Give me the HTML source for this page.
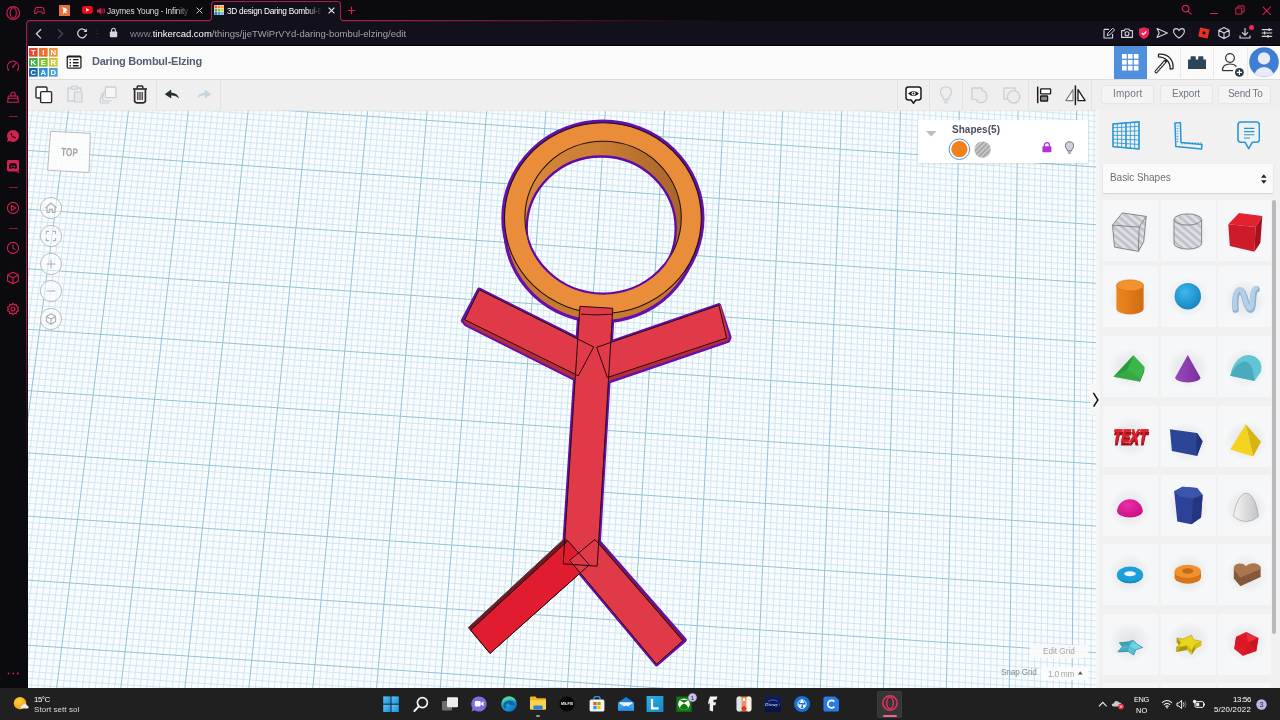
<!DOCTYPE html>
<html lang="en">
<head>
<meta charset="utf-8">
<title>3D design Daring Bombul-Elzing | Tinkercad</title>
<style>
*{box-sizing:border-box;margin:0;padding:0}
html,body{width:1280px;height:720px;overflow:hidden;background:#0b0a0f;font-family:"Liberation Sans",sans-serif}
.abs{position:absolute}
svg.abs{will-change:transform}
.t{position:absolute;white-space:pre;line-height:1;will-change:transform;font-family:"Liberation Sans",sans-serif}
#root{position:relative;width:1280px;height:720px;overflow:hidden}
/* opera chrome */
#tabstrip{left:0;top:0;width:1280px;height:21px;background:#0b0a0f}
#sidebar{left:0;top:0;width:27px;height:688px;background:#0b0a0f}
#addr{left:27px;top:21px;width:1253px;height:25px;background:#12101a}
/* tinkercad */
#tkhead{left:28px;top:46px;width:1252px;height:33px;background:#fafafa}
#tktool{left:28px;top:79px;width:1252px;height:31px;background:#efefef;border-top:1px solid #dcdcdc}
#canvas{left:28px;top:110px;width:1067.6px;height:578px;background:#fafcfe;overflow:hidden}
#rpanel{left:1095.6px;top:110px;width:184.4px;height:578px;background:#f1f1f2;border-left:3px solid #f6f6f7}
#taskbar{left:0;top:688px;width:1280px;height:32px;background:#202020}
</style>
</head>
<body>
<div id="root">
<div id="tabstrip" class="abs"></div>
<div id="sidebar" class="abs"></div>
<div id="addr" class="abs"></div>
<svg class="abs" style="left:0px;top:0px;" width="1280" height="720" viewBox="0 0 1280 720"><defs><linearGradient id="gpk" gradientUnits="userSpaceOnUse" x1="0" y1="0" x2="780" y2="0"><stop offset="0" stop-color="#a2234a"/><stop offset="0.46" stop-color="#a2234a"/><stop offset="0.74" stop-color="#4f142b"/><stop offset="0.95" stop-color="#3a1020" stop-opacity="0"/></linearGradient><linearGradient id="gpv" gradientUnits="userSpaceOnUse" x1="0" y1="20" x2="0" y2="688"><stop offset="0" stop-color="#a2234a"/><stop offset="0.44" stop-color="#a2234a"/><stop offset="0.58" stop-color="#5a1530" stop-opacity=".6"/><stop offset="0.7" stop-color="#3a1020" stop-opacity="0"/></linearGradient></defs>
<path d="M211.5 21V4Q211.5 1.5 214.5 1.5H337.5Q340.5 1.5 340.5 4V21Z" fill="#12101a"/>
<path d="M26.6 688V30" fill="none" stroke="url(#gpv)" stroke-width="1.1"/><path d="M26.6 30.5V24Q26.6 20.6 30 20.6H208.5Q211.5 20.6 211.5 17.5V4.5Q211.5 1.5 214.5 1.5H337.5Q340.5 1.5 340.5 4.5V17.5Q340.5 20.6 343.5 20.6H780" fill="none" stroke="url(#gpk)" stroke-width="1.1"/></svg><svg class="abs" style="left:5px;top:5px;" width="16" height="16" viewBox="0 0 16 16"><circle cx="8.2" cy="8" r="6.4" fill="none" stroke="#d1234f" stroke-width="1.1"/><ellipse cx="8.2" cy="8" rx="3.1" ry="5.2" fill="none" stroke="#d1234f" stroke-width="1.1"/></svg><svg class="abs" style="left:33.8px;top:5.8px;" width="10.8" height="9.2" viewBox="0 0 13 11"><path d="M3.6 1.8H9.4Q11.3 1.8 11.8 4L12.4 7.2Q12.6 9 11.2 9Q10.2 9 9.3 7.6L8.8 6.9H4.2L3.7 7.6Q2.8 9 1.8 9Q0.4 9 0.6 7.2L1.2 4Q1.7 1.8 3.6 1.8Z" fill="none" stroke="#d1234f" stroke-width="1.3" stroke-linejoin="round"/><path d="M3.2 4.4h2M8.6 4.4h.8" stroke="#d1234f" stroke-width="1"/></svg><svg class="abs" style="left:59px;top:4.5px;" width="11.2" height="11.2" viewBox="0 0 11.2 11.2"><rect width="11.2" height="11.2" fill="#e8703a"/><path d="M3.2 2.6Q7.4 2.4 8.4 5.6L6.6 6.2L8.6 8.8L5.8 7.4L3.4 9.2Q5.2 6.4 3.2 2.6Z" fill="#fff"/></svg><svg class="abs" style="left:82px;top:6.2px;" width="11" height="8" viewBox="0 0 11 8"><rect width="10.8" height="7.8" rx="2" fill="#f10a14"/><path d="M4.2 2.1L7.4 3.9L4.2 5.7Z" fill="#fff"/></svg><svg class="abs" style="left:95.5px;top:5.5px;" width="10" height="10" viewBox="0 0 10 10"><path d="M1 3.4H2.8L5.4 1.2V8.8L2.8 6.6H1Z" fill="#d1234f"/><path d="M6.6 3.2Q7.6 5 6.6 6.8M7.8 2Q9.6 5 7.8 8" fill="none" stroke="#d1234f" stroke-width=".9"/></svg><span class="t" style="left:107.40px;top:6.67px;font-size:8.30px;font-weight:400;color:#dcdce0;letter-spacing:-0.189px;">Jaymes Young - Infinity</span><div class="abs" style="left:176px;top:4px;width:16px;height:13px;background:linear-gradient(90deg,rgba(11,10,15,0),#0b0a0f)"></div><svg class="abs" style="left:195.5px;top:7px;" width="7" height="7" viewBox="0 0 7 7"><path d="M.6 .6L6.4 6.4M6.4 .6L.6 6.4" stroke="#cfcfd6" stroke-width="1"/></svg><svg class="abs" style="left:213.8px;top:4.8px;" width="10.4" height="10.4" viewBox="0 0 10.4 10.4"><rect width="10.4" height="10.4" rx="1" fill="#fff"/>
<rect x=".5" y=".5" width="2.8" height="2.8" fill="#e8502e"/><rect x="3.8" y=".5" width="2.8" height="2.8" fill="#ee7a30"/><rect x="7.1" y=".5" width="2.8" height="2.8" fill="#f2a23a"/>
<rect x=".5" y="3.8" width="2.8" height="2.8" fill="#48b04a"/><rect x="3.8" y="3.8" width="2.8" height="2.8" fill="#8dc044"/><rect x="7.1" y="3.8" width="2.8" height="2.8" fill="#d6d63c"/>
<rect x=".5" y="7.1" width="2.8" height="2.8" fill="#1f77b9"/><rect x="3.8" y="7.1" width="2.8" height="2.8" fill="#3c9ad6"/><rect x="7.1" y="7.1" width="2.8" height="2.8" fill="#76b6e4"/></svg><span class="t" style="left:227.00px;top:6.67px;font-size:8.30px;font-weight:400;color:#ffffff;letter-spacing:-0.275px;width:94px;overflow:hidden;padding-bottom:3px;">3D design Daring Bombul-E</span><div class="abs" style="left:306px;top:4px;width:16px;height:13px;background:linear-gradient(90deg,rgba(18,16,26,0),#12101a)"></div><svg class="abs" style="left:327.5px;top:7px;" width="7" height="7" viewBox="0 0 7 7"><path d="M.6 .6L6.4 6.4M6.4 .6L.6 6.4" stroke="#f0f0f4" stroke-width="1.1"/></svg><svg class="abs" style="left:347px;top:6px;" width="9" height="9" viewBox="0 0 9 9"><path d="M4.5 .8V8.2M.8 4.5H8.2" stroke="#d1234f" stroke-width="1.2"/></svg><svg class="abs" style="left:1181px;top:4px;" width="12" height="12" viewBox="0 0 12 12"><circle cx="4.6" cy="4.6" r="3.3" fill="none" stroke="#d1234f" stroke-width="1.2"/><path d="M7.1 7.1L10.4 10.4" stroke="#d1234f" stroke-width="1.3"/></svg><div class="abs" style="left:1209.5px;top:12.8px;width:8.5px;height:1.1px;background:#d1234f"></div><svg class="abs" style="left:1235px;top:5px;" width="10" height="10" viewBox="0 0 10 10"><rect x=".8" y="3" width="6" height="6" fill="none" stroke="#d1234f" stroke-width="1"/><path d="M3 3V.9H9.1V7H6.8" fill="none" stroke="#d1234f" stroke-width="1"/></svg><svg class="abs" style="left:1262px;top:5.5px;" width="9.5" height="9.5" viewBox="0 0 9.5 9.5"><path d="M.7 .7L8.8 8.8M8.8 .7L.7 8.8" stroke="#d1234f" stroke-width="1.1"/></svg><svg class="abs" style="left:34px;top:27.5px;" width="10" height="12" viewBox="0 0 10 12"><path d="M7 1.2L2.4 5.8L7 10.4" fill="none" stroke="#d6d4de" stroke-width="1.3"/></svg><svg class="abs" style="left:55px;top:27.5px;" width="10" height="12" viewBox="0 0 10 12"><path d="M3 1.2L7.6 5.8L3 10.4" fill="none" stroke="#4a4856" stroke-width="1.3"/></svg><svg class="abs" style="left:75.5px;top:27px;" width="12" height="12" viewBox="0 0 12 12"><path d="M9.9 4.2A4.4 4.4 0 1 0 10.4 7.2" fill="none" stroke="#d6d4de" stroke-width="1.25"/><path d="M10.9 1.6V4.9H7.6Z" fill="#d6d4de"/></svg><svg class="abs" style="left:95.5px;top:28.5px;" width="2" height="10" viewBox="0 0 2 10"><circle cx="1" cy="1.2" r=".55" fill="#3c3a48"/><circle cx="1" cy="4.6" r=".55" fill="#3c3a48"/><circle cx="1" cy="8" r=".55" fill="#3c3a48"/></svg><svg class="abs" style="left:109px;top:27px;" width="9" height="11" viewBox="0 0 9 11"><rect x=".8" y="4.6" width="7.4" height="5.6" rx="1" fill="#d9d3e3"/><path d="M2.6 5V3.2A1.9 1.9 0 0 1 6.4 3.2V5" fill="none" stroke="#d9d3e3" stroke-width="1.1"/></svg><span class="t" style="left:130.00px;top:28.66px;font-size:9.50px;font-weight:400;color:#a4a3ae;letter-spacing:-0.002px;"><span style="color:#85848f">www.</span><span style="color:#fff">tinkercad.com</span>/things/jjeTWiPrVYd-daring-bombul-elzing/edit</span><svg class="abs" style="left:1102.3px;top:26px;" width="14" height="14" viewBox="0 0 14 14"><path d="M2 3.4H7M2 3.4V12H10.6V8" fill="none" stroke="#d6d4de" stroke-width="1.1"/><path d="M5.2 9.6L5.8 7.2L10.8 2.2L12.6 4L7.6 9Z" fill="none" stroke="#d6d4de" stroke-width="1" stroke-linejoin="round"/></svg><svg class="abs" style="left:1119.8px;top:26px;" width="14" height="14" viewBox="0 0 14 14"><path d="M1.6 4.6H4.2L5.2 3H8.8L9.8 4.6H12.4V11.4H1.6Z" fill="none" stroke="#d6d4de" stroke-width="1.1" stroke-linejoin="round"/><circle cx="7" cy="7.8" r="2" fill="none" stroke="#d6d4de" stroke-width="1.1"/></svg><svg class="abs" style="left:1136.7px;top:26px;" width="14" height="14" viewBox="0 0 14 14"><path d="M7 1.2L12 2.8V7.2Q12 11 7 13Q2 11 2 7.2V2.8Z" fill="#ea2458"/><path d="M4.8 7L6.4 8.6L9.4 5.4" fill="none" stroke="#fff" stroke-width="1.2"/></svg><svg class="abs" style="left:1154.5px;top:26px;" width="14" height="14" viewBox="0 0 14 14"><path d="M2 2.6L12.4 7L2 11.4L4.2 7Z" fill="none" stroke="#d6d4de" stroke-width="1.1" stroke-linejoin="round"/></svg><svg class="abs" style="left:1171.8px;top:26px;" width="14" height="14" viewBox="0 0 14 14"><path d="M7 12Q1.6 8.4 1.6 5.2Q1.6 2.6 4.2 2.6Q6 2.6 7 4.4Q8 2.6 9.8 2.6Q12.4 2.6 12.4 5.2Q12.4 8.4 7 12Z" fill="none" stroke="#d6d4de" stroke-width="1.1"/></svg><svg class="abs" style="left:1189.4px;top:28.5px;" width="2" height="10" viewBox="0 0 2 10"><circle cx="1" cy="1.2" r=".55" fill="#3c3a48"/><circle cx="1" cy="4.6" r=".55" fill="#3c3a48"/><circle cx="1" cy="8" r=".55" fill="#3c3a48"/></svg><svg class="abs" style="left:1196.5px;top:26px;" width="14" height="14" viewBox="0 0 14 14"><path d="M3.2 1.4L12.6 3.6L10.6 12.6L1.2 10.4Z" fill="#e8321f"/><rect x="5.6" y="5.6" width="2.8" height="2.8" fill="#12101a" transform="rotate(13 7 7)"/></svg><svg class="abs" style="left:1217.3px;top:26px;" width="14" height="14" viewBox="0 0 14 14"><path d="M7 1.4L12.2 4.2V9.8L7 12.6L1.8 9.8V4.2Z M1.8 4.2L7 7L12.2 4.2 M7 7V12.6" fill="none" stroke="#d6d4de" stroke-width="1.1" stroke-linejoin="round"/></svg><svg class="abs" style="left:1238px;top:26px;" width="14" height="14" viewBox="0 0 14 14"><path d="M7 2V9M4 6.4L7 9.2L10 6.4M2 9.6V12H12V9.6" fill="none" stroke="#d6d4de" stroke-width="1.15"/></svg><div class="abs" style="left:1249px;top:25.4px;width:5px;height:5px;border-radius:50%;background:#f0285c"></div><svg class="abs" style="left:1260.4px;top:26px;" width="14" height="14" viewBox="0 0 14 14"><path d="M1.8 3.6H12.2M1.8 7H12.2M1.8 10.4H12.2" stroke="#d6d4de" stroke-width="1.1"/><path d="M9.2 2.2V5M4.6 5.6V8.4M8 9V11.8" stroke="#d6d4de" stroke-width="1.3"/></svg><svg class="abs" style="left:6.3px;top:59.3px;" width="14" height="14" viewBox="0 0 14 14"><path d="M2.6 11.2A5.6 5.6 0 1 1 11.4 11.2" fill="none" stroke="#d1234f" stroke-width="1.1" stroke-linejoin="round" stroke-linecap="round"/><path d="M7 7.8L9.6 4.6" fill="none" stroke="#d1234f" stroke-width="1.1" stroke-linejoin="round" stroke-linecap="round"/><circle cx="7" cy="7.8" r=".9" fill="#d1234f"/></svg><svg class="abs" style="left:6.3px;top:89.7px;" width="14" height="14" viewBox="0 0 14 14"><path d="M2.4 6H11.6L12.4 12.2H1.6Z" fill="none" stroke="#d1234f" stroke-width="1.1" stroke-linejoin="round" stroke-linecap="round"/><path d="M4.8 6Q4.6 3.4 6 2.2H8.4Q9.6 3.4 9.2 6" fill="none" stroke="#d1234f" stroke-width="1.1" stroke-linejoin="round" stroke-linecap="round"/><path d="M2 8.2H12" fill="none" stroke="#d1234f" stroke-width="1.1" stroke-linejoin="round" stroke-linecap="round"/></svg><div class="abs" style="left:9px;top:116.4px;width:8.5px;height:1px;background:#8a1c3a"></div><svg class="abs" style="left:6.3px;top:129.3px;" width="14" height="14" viewBox="0 0 14 14"><path d="M7 1A6 6 0 1 1 3.9 12.1L1 13L1.9 10.1A6 6 0 0 1 7 1Z" fill="#d1234f"/><path d="M4.7 4.2Q4.2 5.6 5.9 7.6Q7.8 9.6 9.6 9.4L10 8.2L8.6 7.5L8 8.1Q6.6 7.6 5.8 6L6.4 5.4L5.8 4Z" fill="#0b0a0f"/></svg><svg class="abs" style="left:6.3px;top:159.2px;" width="14" height="15" viewBox="0 0 14 15"><rect x="1" y="1" width="12" height="11.4" rx="1.6" fill="#d1234f"/><path d="M9.6 12.4H13V14.2Z" fill="#d1234f"/><path d="M3.8 4.6Q7 3.4 10.2 4.6Q11.2 7 10.9 9.2Q9.8 9.9 8.9 9.9L8.5 9.2H5.5L5.1 9.9Q4.2 9.9 3.1 9.2Q2.8 7 3.8 4.6Z" fill="#0b0a0f"/><circle cx="5.7" cy="7.3" r=".9" fill="#d1234f"/><circle cx="8.3" cy="7.3" r=".9" fill="#d1234f"/></svg><div class="abs" style="left:9px;top:186.6px;width:8.5px;height:1px;background:#8a1c3a"></div><svg class="abs" style="left:6.3px;top:200.5px;" width="14" height="14" viewBox="0 0 14 14"><circle cx="7" cy="7" r="5.6" fill="none" stroke="#d1234f" stroke-width="1.1" stroke-linejoin="round" stroke-linecap="round"/><path d="M5.4 4.4L9.8 7L5.4 9.6Z" fill="none" stroke="#d1234f" stroke-width="1.1" stroke-linejoin="round" stroke-linecap="round"/></svg><div class="abs" style="left:9px;top:227.6px;width:8.5px;height:1px;background:#8a1c3a"></div><svg class="abs" style="left:6.3px;top:240.6px;" width="14" height="14" viewBox="0 0 14 14"><circle cx="7" cy="7" r="5.6" fill="none" stroke="#d1234f" stroke-width="1.1" stroke-linejoin="round" stroke-linecap="round"/><path d="M7 3.8V7.2L9.2 8.6" fill="none" stroke="#d1234f" stroke-width="1.1" stroke-linejoin="round" stroke-linecap="round"/></svg><svg class="abs" style="left:6.3px;top:270.5px;" width="14" height="14" viewBox="0 0 14 14"><path d="M7 1.2L12.4 4.1V9.9L7 12.8L1.6 9.9V4.1Z M1.6 4.1L7 7L12.4 4.1 M7 7V12.8" fill="none" stroke="#d1234f" stroke-width="1.1" stroke-linejoin="round" stroke-linecap="round"/></svg><svg class="abs" style="left:6.3px;top:301.6px;" width="14" height="14" viewBox="0 0 14 14"><circle cx="7" cy="7" r="2" fill="none" stroke="#d1234f" stroke-width="1.1" stroke-linejoin="round" stroke-linecap="round"/><path d="M7 1.2L8.2 2.9L10.2 2.4L10.6 4.4L12.6 5.2L11.6 7L12.6 8.8L10.6 9.6L10.2 11.6L8.2 11.1L7 12.8L5.8 11.1L3.8 11.6L3.4 9.6L1.4 8.8L2.4 7L1.4 5.2L3.4 4.4L3.8 2.4L5.8 2.9Z" fill="none" stroke="#d1234f" stroke-width="1.1" stroke-linejoin="round" stroke-linecap="round"/></svg><svg class="abs" style="left:7px;top:671.5px;" width="13" height="3" viewBox="0 0 13 3"><circle cx="1.6" cy="1.5" r=".9" fill="#d1234f"/><circle cx="6.2" cy="1.5" r=".9" fill="#d1234f"/><circle cx="10.8" cy="1.5" r=".9" fill="#d1234f"/></svg><div class="abs" style="left:27px;top:44.6px;width:1253px;height:1.4px;background:#020203"></div>
<div id="tkhead" class="abs"></div>
<div id="tktool" class="abs"></div>
<svg class="abs" style="left:29.05px;top:48.2px;" width="28.7" height="28.7" viewBox="0 0 28.7 28.7"><rect x="0.00" y="0.00" width="8.65" height="8.65" fill="#e8482a"/><text x="4.35" y="7.15" font-family="Liberation Sans,sans-serif" font-weight="700" font-size="7.7" fill="#fff" text-anchor="middle">T</text><rect x="10.00" y="0.00" width="8.65" height="8.65" fill="#ee702c"/><text x="14.35" y="7.15" font-family="Liberation Sans,sans-serif" font-weight="700" font-size="7.7" fill="#fff" text-anchor="middle">I</text><rect x="20.00" y="0.00" width="8.65" height="8.65" fill="#f0933e"/><text x="24.35" y="7.15" font-family="Liberation Sans,sans-serif" font-weight="700" font-size="7.7" fill="#fff" text-anchor="middle">N</text><rect x="0.00" y="10.00" width="8.65" height="8.65" fill="#3eae4a"/><text x="4.35" y="17.15" font-family="Liberation Sans,sans-serif" font-weight="700" font-size="7.7" fill="#fff" text-anchor="middle">K</text><rect x="10.00" y="10.00" width="8.65" height="8.65" fill="#80be30"/><text x="14.35" y="17.15" font-family="Liberation Sans,sans-serif" font-weight="700" font-size="7.7" fill="#fff" text-anchor="middle">E</text><rect x="20.00" y="10.00" width="8.65" height="8.65" fill="#c5cd39"/><text x="24.35" y="17.15" font-family="Liberation Sans,sans-serif" font-weight="700" font-size="7.7" fill="#fff" text-anchor="middle">R</text><rect x="0.00" y="20.00" width="8.65" height="8.65" fill="#1666b1"/><text x="4.35" y="27.15" font-family="Liberation Sans,sans-serif" font-weight="700" font-size="7.7" fill="#fff" text-anchor="middle">C</text><rect x="10.00" y="20.00" width="8.65" height="8.65" fill="#308fd6"/><text x="14.35" y="27.15" font-family="Liberation Sans,sans-serif" font-weight="700" font-size="7.7" fill="#fff" text-anchor="middle">A</text><rect x="20.00" y="20.00" width="8.65" height="8.65" fill="#4e9fd9"/><text x="24.35" y="27.15" font-family="Liberation Sans,sans-serif" font-weight="700" font-size="7.7" fill="#fff" text-anchor="middle">D</text></svg><svg class="abs" style="left:66.2px;top:54.6px;" width="16.2" height="14.4" viewBox="0 0 16.2 14.4"><rect x=".6" y=".5" width="15" height="13.3" rx="1.7" fill="#1f1f1f"/><rect x="1.9" y="2.4" width="12.4" height="10.2" rx=".5" fill="#fff"/><path d="M3.6 4.6h1.4M7 4.6h5.6M3.6 7.7h1.4M7 7.7h5.6M3.6 10.8h1.4M7 10.8h5.6" stroke="#1a1a1a" stroke-width="1.4"/></svg><span class="t" style="left:92.00px;top:56.49px;font-size:11.00px;font-weight:700;color:#526072;letter-spacing:-0.244px;">Daring Bombul-Elzing</span><div class="abs" style="left:1114px;top:46px;width:32.5px;height:32.6px;background:#4f8fdb"></div><svg class="abs" style="left:1122.2px;top:54.4px;" width="16.6" height="16.6" viewBox="0 0 16.6 16.6"><rect x="0.00" y="0.00" width="4.7" height="4.7" fill="#fff"/><rect x="5.90" y="0.00" width="4.7" height="4.7" fill="#fff"/><rect x="11.80" y="0.00" width="4.7" height="4.7" fill="#fff"/><rect x="0.00" y="5.90" width="4.7" height="4.7" fill="#fff"/><rect x="5.90" y="5.90" width="4.7" height="4.7" fill="#fff"/><rect x="11.80" y="5.90" width="4.7" height="4.7" fill="#fff"/><rect x="0.00" y="11.80" width="4.7" height="4.7" fill="#fff"/><rect x="5.90" y="11.80" width="4.7" height="4.7" fill="#fff"/><rect x="11.80" y="11.80" width="4.7" height="4.7" fill="#fff"/></svg><div class="abs" style="left:1180.4px;top:47px;width:1px;height:31px;background:#e9e9e9"></div><div class="abs" style="left:1213.4px;top:47px;width:1px;height:31px;background:#e9e9e9"></div><div class="abs" style="left:1247.2px;top:47px;width:1px;height:31px;background:#e9e9e9"></div><svg class="abs" style="left:1152px;top:51px;" width="24" height="24" viewBox="0 0 24 24"><path d="M4.2 20.6L13.4 10.2" stroke="#222" stroke-width="3.4" stroke-linecap="round"/><path d="M4.2 20.6L13.4 10.2" stroke="#fff" stroke-width="1.3" stroke-linecap="round" stroke-dasharray="1.4 1.4"/><path d="M6.6 3.2Q14 2.6 18.2 7.4Q21.6 11.6 21 17.6L18.2 18Q18.2 12.4 15 9.2Q11.6 5.8 6.4 5.8Z" fill="#fff" stroke="#222" stroke-width="1.3" stroke-linejoin="round"/></svg><svg class="abs" style="left:1187.6px;top:56.2px;" width="18" height="13.4" viewBox="0 0 18 13.4"><path d="M0 3.4H2.6V1Q2.6 .2 3.4 .2H7Q7.8 .2 7.8 1V3.4H10.2V1Q10.2 .2 11 .2H14.6Q15.4 .2 15.4 1V3.4H18V13.2H0Z" fill="#2d4459"/></svg><svg class="abs" style="left:1219px;top:50px;" width="26" height="28" viewBox="0 0 26 28"><circle cx="11" cy="8" r="4.4" fill="none" stroke="#333" stroke-width="1.2"/><path d="M3.4 20.6Q3.4 14 11 14Q15.4 14 17.4 16.6" fill="none" stroke="#333" stroke-width="1.2"/><path d="M3.4 20.6H14" stroke="#333" stroke-width="1.2"/><circle cx="20.4" cy="22.4" r="4.4" fill="#2c3a47"/><path d="M20.4 19.8V25M17.8 22.4H23" stroke="#fff" stroke-width="1.2"/></svg><svg class="abs" style="left:1248.5px;top:47px;" width="30" height="31" viewBox="0 0 30 31"><defs><clipPath id="av"><circle cx="15" cy="15" r="14.8"/></clipPath></defs><circle cx="15" cy="15" r="14.8" fill="#3f7fd1"/><g clip-path="url(#av)"><circle cx="15" cy="11.4" r="6.2" fill="#e6ebf7"/><ellipse cx="15" cy="29" rx="9.6" ry="9" fill="#e6ebf7"/></g></svg><div class="abs" style="left:155.6px;top:80px;width:1px;height:30px;background:#e2e2e2"></div><div class="abs" style="left:220.4px;top:80px;width:1px;height:30px;background:#e2e2e2"></div><div class="abs" style="left:896.6px;top:80px;width:1px;height:30px;background:#e2e2e2"></div><div class="abs" style="left:929.4px;top:80px;width:1px;height:30px;background:#e2e2e2"></div><div class="abs" style="left:962.2px;top:80px;width:1px;height:30px;background:#e2e2e2"></div><div class="abs" style="left:1027.8px;top:80px;width:1px;height:30px;background:#e2e2e2"></div><div class="abs" style="left:1090.5px;top:80px;width:1px;height:30px;background:#e2e2e2"></div><svg class="abs" style="left:34.5px;top:85.6px;" width="18" height="18" viewBox="0 0 18 18"><rect x="1" y="1" width="11" height="11" rx="1.2" fill="#fff" stroke="#2b2b2b" stroke-width="1.4"/><rect x="5.6" y="5.6" width="11" height="11" rx="1.2" fill="#fff" stroke="#2b2b2b" stroke-width="1.4"/></svg><svg class="abs" style="left:66.5px;top:85.4px;" width="16" height="18" viewBox="0 0 16 18"><path d="M4.6 3H1V16H8" fill="none" stroke="#c9cfd5" stroke-width="1.3"/><path d="M10.4 3H13.8V6" fill="none" stroke="#c9cfd5" stroke-width="1.3"/><rect x="4.6" y="1" width="5.8" height="3.4" rx=".8" fill="#e6e9ec" stroke="#c9cfd5" stroke-width="1.1"/><rect x="7.4" y="7" width="7.6" height="10" rx=".8" fill="#e6e9ec" stroke="#c9cfd5" stroke-width="1.2"/></svg><svg class="abs" style="left:98.5px;top:85.6px;" width="18" height="18" viewBox="0 0 18 18"><path d="M3.4 7L1 14.6Q1 17 3 17H10" fill="none" stroke="#c9cfd5" stroke-width="1.2"/><path d="M5.4 5L3.4 12.6Q3.4 15 5.4 15H12.4" fill="none" stroke="#c9cfd5" stroke-width="1.2"/><rect x="6.4" y="1" width="10.6" height="10.6" rx="1.2" fill="#f6f6f6" stroke="#c9cfd5" stroke-width="1.3"/></svg><svg class="abs" style="left:131.5px;top:84.6px;" width="16" height="19" viewBox="0 0 16 19"><path d="M1 4H15" stroke="#2b2b2b" stroke-width="1.7"/><path d="M5.2 3.6V1.8Q5.2 1 6 1H10Q10.8 1 10.8 1.8V3.6" fill="none" stroke="#2b2b2b" stroke-width="1.5"/><path d="M2.6 4.4V15.6Q2.6 17.8 4.8 17.8H11.2Q13.4 17.8 13.4 15.6V4.4" fill="none" stroke="#2b2b2b" stroke-width="1.7"/><path d="M5.8 7V15M8 7V15M10.2 7V15" stroke="#2b2b2b" stroke-width="1.2"/></svg><svg class="abs" style="left:164.4px;top:89px;" width="16" height="11" viewBox="0 0 16 11"><path d="M7.2 .6L.8 5.2L7.2 9.6V6.6Q11.8 6.2 15 9.8Q14.4 4.2 7.2 3.4Z" fill="#22302f"/></svg><svg class="abs" style="left:196px;top:89px;" width="16" height="11" viewBox="0 0 16 11"><path d="M8.8 .6L15.2 5.2L8.8 9.6V6.6Q4.2 6.2 1 9.8Q1.6 4.2 8.8 3.4Z" fill="#c8d4dc"/></svg><svg class="abs" style="left:905px;top:86.4px;" width="17" height="19" viewBox="0 0 17 19"><path d="M3.4 1H13.6Q16 1 16 3.4V11.6Q16 14 13.6 14H10.8L8.5 17.2L6.2 14H3.4Q1 14 1 11.6V3.4Q1 1 3.4 1Z" fill="#fff" stroke="#1b1b1b" stroke-width="1.5" stroke-linejoin="round"/><path d="M3 7.5Q8.5 2.4 14 7.5Q8.5 12.6 3 7.5Z" fill="#1b1b1b"/><circle cx="8.5" cy="7.5" r="2" fill="#fff"/><circle cx="8.5" cy="7.5" r="1" fill="#1b1b1b"/></svg><svg class="abs" style="left:939px;top:86.4px;" width="14" height="19" viewBox="0 0 14 19"><path d="M7 1Q12.4 1 12.4 6.2Q12.4 8.6 10.4 10.6Q9.6 11.6 9.6 13.2H4.4Q4.4 11.6 3.6 10.6Q1.6 8.6 1.6 6.2Q1.6 1 7 1Z" fill="none" stroke="#c9cfd5" stroke-width="1.2"/><path d="M4.6 15H9.4M5 16.8H9" stroke="#c9cfd5" stroke-width="1.1"/></svg><svg class="abs" style="left:970.6px;top:87.4px;" width="17" height="17" viewBox="0 0 17 17"><path d="M1 1H11V3.4Q16 4.4 16 9.6Q16 15.6 10 15.6Q6.4 15.6 5 12.4H1Z" fill="#ececec" stroke="#c9cfd5" stroke-width="1.3" stroke-linejoin="round"/></svg><svg class="abs" style="left:1002.6px;top:87.4px;" width="18" height="17" viewBox="0 0 18 17"><rect x="1" y="1" width="11" height="11" fill="none" stroke="#c9cfd5" stroke-width="1.3"/><circle cx="10.6" cy="9.8" r="6.2" fill="#ececec" stroke="#c9cfd5" stroke-width="1.3"/></svg><svg class="abs" style="left:1036px;top:85.6px;" width="16" height="18" viewBox="0 0 16 18"><path d="M1.7 .6V17.2" stroke="#1b1b1b" stroke-width="1.5"/><rect x="4.6" y="2.8" width="10" height="5" rx=".6" fill="#fff" stroke="#1b1b1b" stroke-width="1.3"/><rect x="4.6" y="10" width="7" height="5" rx=".6" fill="#8d8d8d" stroke="#1b1b1b" stroke-width="1.3"/></svg><svg class="abs" style="left:1064px;top:84.6px;" width="23" height="21" viewBox="0 0 23 21"><path d="M11.4 .4V20.2" stroke="#1b1b1b" stroke-width="1.5"/><path d="M9 4.6V15.6H1.8Z" fill="#fff" stroke="#7b7b7b" stroke-width="1.1" stroke-linejoin="round"/><path d="M14 4.6V15.6H21.2Z" fill="#fff" stroke="#1b1b1b" stroke-width="1.3" stroke-linejoin="round"/></svg><div class="abs" style="left:1101px;top:85px;width:53px;height:19px;background:#f4f4f4;border:1px solid #e6e6e6;border-radius:2px"></div><span class="t" style="left:1112.70px;top:89.34px;font-size:10.00px;font-weight:400;color:#6f7780;letter-spacing:0.193px;">Import</span><div class="abs" style="left:1160px;top:85px;width:52.5px;height:19px;background:#f4f4f4;border:1px solid #e6e6e6;border-radius:2px"></div><span class="t" style="left:1172.00px;top:89.34px;font-size:10.00px;font-weight:400;color:#6f7780;letter-spacing:-0.150px;">Export</span><div class="abs" style="left:1218px;top:85px;width:53px;height:19px;background:#f4f4f4;border:1px solid #e6e6e6;border-radius:2px"></div><span class="t" style="left:1227.60px;top:89.34px;font-size:10.00px;font-weight:400;color:#6f7780;letter-spacing:-0.302px;">Send To</span>

<div id="canvas" class="abs">
<svg class="abs" style="left:-28px;top:-110px" width="1280" height="720" viewBox="0 0 1280 720">
<path d="M26.8 108.0L26.0 113.6M32.8 108.0L26.0 157.8M38.8 108.0L26.0 202.5M44.8 108.0L26.0 247.6M50.8 108.0L26.0 293.2M56.8 108.0L26.0 339.3M62.8 108.0L26.0 386.0M74.8 108.0L26.0 480.8M80.8 108.0L26.0 529.0M86.8 108.0L26.0 577.7M92.8 108.0L26.0 627.0M98.8 108.0L26.0 676.8M104.8 108.0L30.7 690.0M110.8 108.0L37.2 690.0M116.8 108.0L43.6 690.0M122.8 108.0L50.0 690.0M134.8 108.0L62.9 690.0M140.8 108.0L69.3 690.0M146.8 108.0L75.7 690.0M152.8 108.0L82.1 690.0M158.8 108.0L88.5 690.0M164.7 108.0L95.0 690.0M170.7 108.0L101.4 690.0M176.7 108.0L107.8 690.0M182.7 108.0L114.2 690.0M194.7 108.0L127.0 690.0M200.7 108.0L133.4 690.0M206.6 108.0L139.8 690.0M212.6 108.0L146.3 690.0M218.6 108.0L152.7 690.0M224.6 108.0L159.1 690.0M230.6 108.0L165.5 690.0M236.5 108.0L171.9 690.0M242.5 108.0L178.3 690.0M254.5 108.0L191.1 690.0M260.5 108.0L197.5 690.0M266.4 108.0L203.9 690.0M272.4 108.0L210.3 690.0M278.4 108.0L216.7 690.0M284.3 108.0L223.1 690.0M290.3 108.0L229.5 690.0M296.3 108.0L235.9 690.0M302.3 108.0L242.3 690.0M314.2 108.0L255.1 690.0M320.2 108.0L261.5 690.0M326.1 108.0L267.9 690.0M332.1 108.0L274.2 690.0M338.1 108.0L280.6 690.0M344.0 108.0L287.0 690.0M350.0 108.0L293.4 690.0M355.9 108.0L299.8 690.0M361.9 108.0L306.2 690.0M373.8 108.0L318.9 690.0M379.8 108.0L325.3 690.0M385.7 108.0L331.7 690.0M391.7 108.0L338.1 690.0M397.6 108.0L344.5 690.0M403.6 108.0L350.9 690.0M409.5 108.0L357.2 690.0M415.5 108.0L363.6 690.0M421.4 108.0L370.0 690.0M433.3 108.0L382.7 690.0M439.3 108.0L389.1 690.0M445.2 108.0L395.5 690.0M451.2 108.0L401.9 690.0M457.1 108.0L408.2 690.0M463.1 108.0L414.6 690.0M469.0 108.0L421.0 690.0M475.0 108.0L427.3 690.0M480.9 108.0L433.7 690.0M492.8 108.0L446.4 690.0M498.7 108.0L452.8 690.0M504.7 108.0L459.2 690.0M510.6 108.0L465.5 690.0M516.6 108.0L471.9 690.0M522.5 108.0L478.2 690.0M528.4 108.0L484.6 690.0M534.4 108.0L491.0 690.0M540.3 108.0L497.3 690.0M552.2 108.0L510.0 690.0M558.1 108.0L516.4 690.0M564.0 108.0L522.7 690.0M570.0 108.0L529.1 690.0M575.9 108.0L535.4 690.0M581.8 108.0L541.8 690.0M587.7 108.0L548.1 690.0M593.7 108.0L554.5 690.0M599.6 108.0L560.8 690.0M611.4 108.0L573.5 690.0M617.4 108.0L579.9 690.0M623.3 108.0L586.2 690.0M629.2 108.0L592.6 690.0M635.1 108.0L598.9 690.0M641.0 108.0L605.3 690.0M647.0 108.0L611.6 690.0M652.9 108.0L617.9 690.0M658.8 108.0L624.3 690.0M670.6 108.0L636.9 690.0M676.5 108.0L643.3 690.0M682.4 108.0L649.6 690.0M688.4 108.0L656.0 690.0M694.3 108.0L662.3 690.0M700.2 108.0L668.6 690.0M706.1 108.0L675.0 690.0M712.0 108.0L681.3 690.0M717.9 108.0L687.6 690.0M729.7 108.0L700.3 690.0M735.6 108.0L706.6 690.0M741.5 108.0L712.9 690.0M747.4 108.0L719.2 690.0M753.3 108.0L725.6 690.0M759.2 108.0L731.9 690.0M765.1 108.0L738.2 690.0M771.0 108.0L744.5 690.0M776.9 108.0L750.9 690.0M788.7 108.0L763.5 690.0M794.6 108.0L769.8 690.0M800.5 108.0L776.1 690.0M806.4 108.0L782.4 690.0M812.3 108.0L788.8 690.0M818.2 108.0L795.1 690.0M824.1 108.0L801.4 690.0M830.0 108.0L807.7 690.0M835.9 108.0L814.0 690.0M847.7 108.0L826.6 690.0M853.6 108.0L832.9 690.0M859.4 108.0L839.3 690.0M865.3 108.0L845.6 690.0M871.2 108.0L851.9 690.0M877.1 108.0L858.2 690.0M883.0 108.0L864.5 690.0M888.9 108.0L870.8 690.0M894.7 108.0L877.1 690.0M906.5 108.0L889.7 690.0M912.4 108.0L896.0 690.0M918.3 108.0L902.3 690.0M924.1 108.0L908.6 690.0M930.0 108.0L914.9 690.0M935.9 108.0L921.2 690.0M941.8 108.0L927.5 690.0M947.6 108.0L933.8 690.0M953.5 108.0L940.0 690.0M965.3 108.0L952.6 690.0M971.1 108.0L958.9 690.0M977.0 108.0L965.2 690.0M982.9 108.0L971.5 690.0M988.7 108.0L977.8 690.0M994.6 108.0L984.1 690.0M1000.5 108.0L990.4 690.0M1006.3 108.0L996.6 690.0M1012.2 108.0L1002.9 690.0M1023.9 108.0L1015.5 690.0M1029.8 108.0L1021.8 690.0M1035.7 108.0L1028.0 690.0M1041.5 108.0L1034.3 690.0M1047.4 108.0L1040.6 690.0M1053.2 108.0L1046.9 690.0M1059.1 108.0L1053.2 690.0M1064.9 108.0L1059.4 690.0M1070.8 108.0L1065.7 690.0M1082.5 108.0L1078.3 690.0M1088.4 108.0L1084.5 690.0M1094.2 108.0L1090.8 690.0M1100.0 121.8L1097.1 690.0M985.4 108.0L1100.0 116.0M904.4 108.0L1100.0 121.7M823.3 108.0L1100.0 127.4M742.0 108.0L1100.0 133.0M660.5 108.0L1100.0 138.7M578.8 108.0L1100.0 144.4M497.0 108.0L1100.0 150.1M415.1 108.0L1100.0 155.8M332.9 108.0L1100.0 161.6M168.1 108.0L1100.0 173.0M85.5 108.0L1100.0 178.8M26.0 109.6L1100.0 184.5M26.0 115.4L1100.0 190.3M26.0 121.2L1100.0 196.1M26.0 127.0L1100.0 201.8M26.0 132.8L1100.0 207.6M26.0 138.6L1100.0 213.4M26.0 144.5L1100.0 219.2M26.0 156.1L1100.0 230.8M26.0 162.0L1100.0 236.7M26.0 167.8L1100.0 242.5M26.0 173.7L1100.0 248.3M26.0 179.6L1100.0 254.2M26.0 185.5L1100.0 260.0M26.0 191.4L1100.0 265.9M26.0 197.3L1100.0 271.8M26.0 203.2L1100.0 277.7M26.0 215.0L1100.0 289.5M26.0 220.9L1100.0 295.4M26.0 226.9L1100.0 301.3M26.0 232.8L1100.0 307.2M26.0 238.8L1100.0 313.1M26.0 244.7L1100.0 319.1M26.0 250.7L1100.0 325.0M26.0 256.7L1100.0 331.0M26.0 262.7L1100.0 337.0M26.0 274.7L1100.0 348.9M26.0 280.7L1100.0 354.9M26.0 286.8L1100.0 360.9M26.0 292.8L1100.0 366.9M26.0 298.8L1100.0 372.9M26.0 304.9L1100.0 379.0M26.0 310.9L1100.0 385.0M26.0 317.0L1100.0 391.1M26.0 323.1L1100.0 397.1M26.0 335.3L1100.0 409.2M26.0 341.4L1100.0 415.3M26.0 347.5L1100.0 421.4M26.0 353.6L1100.0 427.5M26.0 359.7L1100.0 433.6M26.0 365.9L1100.0 439.7M26.0 372.0L1100.0 445.8M26.0 378.2L1100.0 452.0M26.0 384.4L1100.0 458.1M26.0 396.7L1100.0 470.4M26.0 402.9L1100.0 476.6M26.0 409.1L1100.0 482.8M26.0 415.3L1100.0 489.0M26.0 421.6L1100.0 495.2M26.0 427.8L1100.0 501.4M26.0 434.0L1100.0 507.6M26.0 440.3L1100.0 513.8M26.0 446.5L1100.0 520.0M26.0 459.1L1100.0 532.5M26.0 465.3L1100.0 538.8M26.0 471.6L1100.0 545.0M26.0 477.9L1100.0 551.3M26.0 484.3L1100.0 557.6M26.0 490.6L1100.0 563.9M26.0 496.9L1100.0 570.2M26.0 503.2L1100.0 576.5M26.0 509.6L1100.0 582.8M26.0 522.3L1100.0 595.5M26.0 528.7L1100.0 601.9M26.0 535.1L1100.0 608.2M26.0 541.5L1100.0 614.6M26.0 547.9L1100.0 621.0M26.0 554.3L1100.0 627.4M26.0 560.7L1100.0 633.8M26.0 567.2L1100.0 640.2M26.0 573.6L1100.0 646.6M26.0 586.5L1100.0 659.4M26.0 593.0L1100.0 665.9M26.0 599.5L1100.0 672.3M26.0 606.0L1100.0 678.8M26.0 612.5L1100.0 685.3M26.0 619.0L1074.1 690.0M26.0 625.5L978.3 690.0M26.0 632.0L882.2 690.0M26.0 638.6L786.0 690.0M26.0 651.7L592.8 690.0M26.0 658.2L495.8 690.0M26.0 664.8L398.7 690.0M26.0 671.4L301.3 690.0M26.0 678.0L203.8 690.0M26.0 684.6L106.0 690.0" stroke="#c4e2ee" stroke-width="0.8" fill="none"/>
<path d="M68.8 108.0L26.0 433.1M128.8 108.0L56.4 690.0M188.7 108.0L120.6 690.0M248.5 108.0L184.7 690.0M308.2 108.0L248.7 690.0M367.9 108.0L312.6 690.0M427.4 108.0L376.4 690.0M486.9 108.0L440.1 690.0M546.2 108.0L503.7 690.0M605.5 108.0L567.2 690.0M664.7 108.0L630.6 690.0M723.8 108.0L693.9 690.0M782.8 108.0L757.2 690.0M841.8 108.0L820.3 690.0M900.6 108.0L883.4 690.0M959.4 108.0L946.3 690.0M1018.1 108.0L1009.2 690.0M1076.7 108.0L1072.0 690.0M1066.2 108.0L1100.0 110.4M250.6 108.0L1100.0 167.3M26.0 150.3L1100.0 225.0M26.0 209.1L1100.0 283.6M26.0 268.7L1100.0 342.9M26.0 329.2L1100.0 403.2M26.0 390.5L1100.0 464.3M26.0 452.8L1100.0 526.3M26.0 516.0L1100.0 589.2M26.0 580.0L1100.0 653.0M26.0 645.1L689.5 690.0" stroke="#8fc4d8" stroke-width="1" fill="none"/>
<defs>
<clipPath id="cTopIn"><ellipse cx="603.1" cy="217.4" rx="78.2" ry="76.2"/></clipPath>
<clipPath id="cBotIn"><ellipse cx="601.2" cy="228.6" rx="74.5" ry="72.1"/></clipPath>
<mask id="mHole" maskUnits="userSpaceOnUse" x="0" y="0" width="1280" height="720">
<rect x="0" y="0" width="1280" height="720" fill="#fff"/>
<ellipse cx="601.2" cy="228.6" rx="74.5" ry="72.1" fill="#000" clip-path="url(#cTopIn)"/>
</mask>
<linearGradient id="gWall" x1="0" y1="0" x2="1" y2="0">
<stop offset="0" stop-color="#d8873a"/><stop offset="0.5" stop-color="#c97c33"/><stop offset="1" stop-color="#a9642a"/>
</linearGradient>
</defs>
<!-- selection outline (purple) drawn under fills -->
<g fill="none" stroke="#640fae" stroke-width="4.4" stroke-linejoin="round">
<g mask="url(#mHole)">
<ellipse cx="602.9" cy="218.1" rx="99.4" ry="96.3"/>
<ellipse cx="601.2" cy="228.6" rx="95.8" ry="92.7"/>
</g>
<polygon points="579.9,306.3 612.8,308.3 597.2,566.2 563.2,563.8"/>
<polygon points="479.2,289.7 593.7,347 578.3,375.8 575.8,379.4 466.2,324.4 463,320.6"/>
<polygon points="718.9,305.3 729.4,337.4 728,340.6 608.6,381.3 596.7,347.3"/>
<polygon points="595,539.4 597,539.6 684.6,640 656.6,664.2 569.7,560.3"/>
</g>
<!-- ring -->
<g mask="url(#mHole)">
<ellipse cx="601.2" cy="228.6" rx="94.8" ry="91.7" fill="#c8792f"/>
<ellipse cx="602.9" cy="218.1" rx="98.4" ry="95.3" fill="#ea8d3b" stroke="#1d1208" stroke-width="1.05"/>
<ellipse cx="603.1" cy="217.4" rx="78.2" ry="76.2" fill="url(#gWall)" stroke="#1d1208" stroke-width="1.05"/>
</g>
<g fill="none" stroke="#5f0aa8" stroke-width="2.3">
<ellipse cx="601.2" cy="228.6" rx="74.5" ry="72.1" clip-path="url(#cTopIn)"/>
<ellipse cx="603.1" cy="217.4" rx="78.2" ry="76.2" clip-path="url(#cBotIn)"/>
</g>
<!-- arm walls -->
<polygon points="464.7,319.7 578.3,375.8 575.8,379.4 466.2,324.4 463,320.6" fill="#b82c38"/>
<polygon points="726.6,338 729.4,337.4 728,340.6 608.6,381.3 607.4,377.5" fill="#b82c38"/>
<polygon points="718.9,305.3 720.6,305 729.4,337.4 726.6,338" fill="#c9323f"/>
<polygon points="595,539.4 597,539.6 684.6,640 682.9,640.8" fill="#7a1f2b"/>
<!-- selected red top faces -->
<polygon points="579.9,306.3 612.8,308.3 597.2,566.2 563.2,563.8" fill="#e03a48"/>
<polygon points="565,538 589.3,564.9 490,653.4 468.3,627.6" fill="#6e1a24" stroke="#5a3a40" stroke-width="1"/>
<polygon points="567.8,540.8 589.3,564.9 490,653.4 470.6,630" fill="#e21c2f"/>
<g fill="#e03a48">
<polygon points="595,539.4 682.9,640.8 656.6,664.2 569.7,560.3"/>
<polygon points="479.2,289.7 593.7,347 578.3,375.8 464.7,319.7"/>
<polygon points="718.9,305.3 726.6,338 607.4,377.5 596.7,347.3"/>
</g>
<!-- thin dark edges -->
<g fill="none" stroke="#24090e" stroke-width="1" stroke-linejoin="round">
<polygon points="579.9,306.3 612.8,308.3 597.2,566.2 563.2,563.8"/>
<polygon points="479.2,289.7 593.7,347 578.3,375.8 464.7,319.7"/>
<polygon points="718.9,305.3 726.6,338 607.4,377.5 596.7,347.3"/>
<polygon points="595,539.4 682.9,640.8 656.6,664.2 569.7,560.3"/>
<polygon points="567.8,540.8 589.3,564.9 490,653.4 470.6,630"/>
<path d="M580.9,314.2 Q596,315.6 612.4,314.2"/>
</g>

</svg>
</div>

<div id="rpanel" class="abs"></div>
<svg class="abs" style="left:1112px;top:120.6px;" width="28.4" height="29.4" viewBox="0 0 28.4 29.4"><path d="M1 3.00L27 0.80M1 6.77L27 5.33M1 10.53L27 9.87M1 14.30L27 14.40M1 18.07L27 18.93M1 21.83L27 23.47M1 25.60L27 28.00M1.00 3.00L1.00 25.60M5.33 2.63L5.33 26.00M9.67 2.27L9.67 26.40M14.00 1.90L14.00 26.80M18.33 1.53L18.33 27.20M22.67 1.17L22.67 27.60M27.00 0.80L27.00 28.00" fill="none" stroke="#2797d5" stroke-width=".85"/><path d="M1 3L27 .8V28L1 25.6Z M14 1.9V26.8" fill="none" stroke="#2797d5" stroke-width="1.35"/></svg><svg class="abs" style="left:1173.6px;top:122.4px;" width="29.4" height="28" viewBox="0 0 29.4 28"><path d="M1 1L6.4 .6L7 20.4L28 22.4L27.6 27L1.8 24.6Z" fill="#f1f1f2" stroke="#2797d5" stroke-width="1.5" stroke-linejoin="round"/><path d="M8.0 22.4v-2.2M10.7 22.4v-2.2M13.4 22.4v-2.2M16.1 22.4v-2.2M18.8 22.4v-2.2M21.5 22.4v-2.2M24.2 22.4v-2.2M26.9 22.4v-2.2M4.6 4.0h-2M4.6 6.6h-2M4.6 9.2h-2M4.6 11.8h-2M4.6 14.4h-2M4.6 17.0h-2M4.6 19.6h-2" stroke="#2797d5" stroke-width=".8"/></svg><svg class="abs" style="left:1237.4px;top:121.2px;" width="23.4" height="29" viewBox="0 0 23.4 29"><path d="M4 1H19.4Q22.4 1 22.4 4V18.2Q22.4 21.2 19.4 21.2H15.4L11.7 27.6L8 21.2H4Q1 21.2 1 18.2V4Q1 1 4 1Z" fill="#f1f1f2" stroke="#2797d5" stroke-width="1.6" stroke-linejoin="round"/><path d="M7 7.4H17.4M7 10.6H17.4M7 13.8H17.4M7 17H13" stroke="#2797d5" stroke-width="1.1"/></svg><div class="abs" style="left:1103.2px;top:164px;width:169.6px;height:29px;background:#fafafa;box-shadow:0 1px 2px rgba(0,0,0,.14);border-radius:1px"></div><span class="t" style="left:1110.40px;top:173.44px;font-size:10.00px;font-weight:400;color:#6d6d76;letter-spacing:-0.046px;">Basic Shapes</span><svg class="abs" style="left:1260.8px;top:173.6px;" width="5.6" height="10" viewBox="0 0 5.6 10"><path d="M0 3.8L2.8 .2L5.6 3.8ZM0 6.2L2.8 9.8L5.6 6.2Z" fill="#222"/></svg><div class="abs" style="left:1103px;top:199.9px;width:55.2px;height:61px;background:#f6f7f9"></div><div class="abs" style="left:1160.6px;top:199.9px;width:55.4px;height:61px;background:#f6f7f9"></div><div class="abs" style="left:1218.4px;top:199.9px;width:52.2px;height:61px;background:#f6f7f9"></div><div class="abs" style="left:1103px;top:266px;width:55.2px;height:61px;background:#f6f7f9"></div><div class="abs" style="left:1160.6px;top:266px;width:55.4px;height:61px;background:#f6f7f9"></div><div class="abs" style="left:1218.4px;top:266px;width:52.2px;height:61px;background:#f6f7f9"></div><div class="abs" style="left:1103px;top:336px;width:55.2px;height:61px;background:#f6f7f9"></div><div class="abs" style="left:1160.6px;top:336px;width:55.4px;height:61px;background:#f6f7f9"></div><div class="abs" style="left:1218.4px;top:336px;width:52.2px;height:61px;background:#f6f7f9"></div><div class="abs" style="left:1103px;top:405.6px;width:55.2px;height:61px;background:#f6f7f9"></div><div class="abs" style="left:1160.6px;top:405.6px;width:55.4px;height:61px;background:#f6f7f9"></div><div class="abs" style="left:1218.4px;top:405.6px;width:52.2px;height:61px;background:#f6f7f9"></div><div class="abs" style="left:1103px;top:475px;width:55.2px;height:61px;background:#f6f7f9"></div><div class="abs" style="left:1160.6px;top:475px;width:55.4px;height:61px;background:#f6f7f9"></div><div class="abs" style="left:1218.4px;top:475px;width:52.2px;height:61px;background:#f6f7f9"></div><div class="abs" style="left:1103px;top:544px;width:55.2px;height:61px;background:#f6f7f9"></div><div class="abs" style="left:1160.6px;top:544px;width:55.4px;height:61px;background:#f6f7f9"></div><div class="abs" style="left:1218.4px;top:544px;width:52.2px;height:61px;background:#f6f7f9"></div><div class="abs" style="left:1103px;top:614.2px;width:55.2px;height:61px;background:#f6f7f9"></div><div class="abs" style="left:1160.6px;top:614.2px;width:55.4px;height:61px;background:#f6f7f9"></div><div class="abs" style="left:1218.4px;top:614.2px;width:52.2px;height:61px;background:#f6f7f9"></div><div class="abs" style="left:1103px;top:682.6px;width:55.2px;height:5.4px;background:#f6f7f9"></div><div class="abs" style="left:1160.6px;top:682.6px;width:55.4px;height:5.4px;background:#f6f7f9"></div><div class="abs" style="left:1218.4px;top:682.6px;width:52.2px;height:5.4px;background:#f6f7f9"></div><div class="abs" style="left:1271.6px;top:200.4px;width:4.8px;height:434px;border-radius:2.4px;background:#b9b9bb"></div><svg class="abs" style="left:0px;top:0px;" width="1280" height="688" viewBox="0 0 1280 688"><defs>
<pattern id="st" width="5.6" height="5.6" patternUnits="userSpaceOnUse" patternTransform="rotate(40)"><rect width="5.6" height="5.6" fill="#dcdfe3"/><rect width="5.6" height="2.7" fill="#bfc3c9"/></pattern>
<radialGradient id="sh"><stop offset="0" stop-color="#000" stop-opacity=".08"/><stop offset=".6" stop-color="#000" stop-opacity=".04"/><stop offset="1" stop-color="#000" stop-opacity="0"/></radialGradient>
<radialGradient id="sph" cx=".4" cy=".35" r=".7"><stop offset="0" stop-color="#3bb9ec"/><stop offset="1" stop-color="#1583bd"/></radialGradient>
<linearGradient id="ocyl" x1="0" x2="1"><stop offset="0" stop-color="#ec871f"/><stop offset="1" stop-color="#cf6c14"/></linearGradient>
<linearGradient id="par" x1="0" x2="1"><stop offset="0" stop-color="#f4f4f4"/><stop offset="1" stop-color="#c4c4c6"/></linearGradient>
<linearGradient id="cone" x1="0" x2="1"><stop offset="0" stop-color="#9a48bd"/><stop offset="1" stop-color="#7a2f9b"/></linearGradient>
<radialGradient id="dome" cx=".4" cy=".3" r=".8"><stop offset="0" stop-color="#ee2aa8"/><stop offset="1" stop-color="#c4107f"/></radialGradient>
</defs><ellipse cx="1129" cy="233" rx="21" ry="20" fill="url(#sh)"/><ellipse cx="1188" cy="233" rx="21" ry="20" fill="url(#sh)"/><ellipse cx="1245" cy="233" rx="21" ry="20" fill="url(#sh)"/><ellipse cx="1130" cy="298" rx="21" ry="20" fill="url(#sh)"/><ellipse cx="1188" cy="297" rx="21" ry="20" fill="url(#sh)"/><ellipse cx="1245" cy="300" rx="21" ry="20" fill="url(#sh)"/><ellipse cx="1130" cy="368" rx="21" ry="20" fill="url(#sh)"/><ellipse cx="1188" cy="368" rx="21" ry="20" fill="url(#sh)"/><ellipse cx="1246" cy="368" rx="21" ry="20" fill="url(#sh)"/><ellipse cx="1131" cy="437" rx="21" ry="20" fill="url(#sh)"/><ellipse cx="1187" cy="442" rx="21" ry="20" fill="url(#sh)"/><ellipse cx="1246" cy="441" rx="21" ry="20" fill="url(#sh)"/><ellipse cx="1130" cy="508" rx="21" ry="20" fill="url(#sh)"/><ellipse cx="1188" cy="506" rx="21" ry="20" fill="url(#sh)"/><ellipse cx="1246" cy="508" rx="21" ry="20" fill="url(#sh)"/><ellipse cx="1130" cy="574" rx="21" ry="20" fill="url(#sh)"/><ellipse cx="1188" cy="574" rx="21" ry="20" fill="url(#sh)"/><ellipse cx="1247" cy="574" rx="21" ry="20" fill="url(#sh)"/><ellipse cx="1130" cy="642" rx="21" ry="20" fill="url(#sh)"/><ellipse cx="1189" cy="641" rx="21" ry="20" fill="url(#sh)"/><ellipse cx="1246" cy="642" rx="21" ry="20" fill="url(#sh)"/><path d="M1112.5 225.1L1122.3 212.9L1146.2 216.4L1143.7 241.7L1138.4 251.4L1114.5 247.1Z" fill="url(#st)" stroke="#83878c" stroke-width="1" stroke-linejoin="round"/><path d="M1112.5 225.1L1139.2 227.1L1146.2 216.4M1139.2 227.1L1138.4 251.4" fill="none" stroke="#83878c" stroke-width="1" stroke-linejoin="round"/><path d="M1174 219.5V243.5A13.8 5.6 0 0 0 1201.6 243.5V219.5A13.8 5.6 0 0 0 1174 219.5Z" fill="url(#st)" stroke="#83878c" stroke-width="1" stroke-linejoin="round"/><path d="M1174 219.5A13.8 5.6 0 0 0 1201.6 219.5" fill="none" stroke="#83878c" stroke-width="1" stroke-linejoin="round"/><path d="M1228.3 224.2L1239 212.9L1262.3 216L1255.5 227.1Z" fill="#e3222f"/><path d="M1228.3 224.2L1255.5 227.1L1254.5 251.8L1229.8 246Z" fill="#cd1b29"/><path d="M1255.5 227.1L1262.3 216L1260.4 242.7L1254.5 251.8Z" fill="#a6131f"/><path d="M1116.4 285.4V308.8A13.6 5.6 0 0 0 1143.6 308.8V285.4Z" fill="url(#ocyl)"/><ellipse cx="1130" cy="285.4" rx="13.6" ry="5.6" fill="#f2932f" stroke="#c96a14" stroke-width=".5"/><circle cx="1187.8" cy="296.2" r="13.2" fill="url(#sph)"/><path d="M1235.6 309.6Q1234.2 296 1238 291.6Q1241.8 288.2 1244.4 296.4Q1247 306.8 1249.8 309.4Q1252.6 311.4 1253 300Q1253.2 290.2 1256.6 289.2" fill="none" stroke="#8fb2d0" stroke-width="6.4" stroke-linecap="round" stroke-linejoin="round"/><path d="M1235 308.4Q1233.6 294.8 1237.4 290.4Q1241.2 287 1243.8 295.2Q1246.4 305.6 1249.2 308.2Q1252 310.2 1252.4 298.8Q1252.6 289 1256 288" fill="none" stroke="#b3d0e8" stroke-width="4.6" stroke-linecap="round" stroke-linejoin="round"/><path d="M1133.5 355.3L1144.6 367L1139.2 381.5L1113.5 376.7Z" fill="#3cb54a"/><path d="M1133.5 355.3L1113.5 376.7L1127.4 369.4Z" fill="#2b9a3b"/><path d="M1113.5 376.7L1139.2 381.5L1140.4 378.4L1127.4 369.4Z" fill="#2f9f40" opacity=".55"/><path d="M1139.2 381.5L1144.6 367L1144.2 371.6L1140 382Z" fill="#23852f"/><path d="M1187.8 354.9L1175.2 377.4A12.6 5 0 0 0 1200.4 377.4Z" fill="url(#cone)"/><path d="M1230.2 375.7Q1233 360.6 1243.2 356Q1253.8 352.4 1260.4 362.1Q1262 366.4 1261 371.8L1254.5 381Z" fill="#61c5d5"/><path d="M1230.2 375.7Q1234.6 364 1243.8 361.6Q1252.8 360.6 1254.5 381Z" fill="#4aabbc"/><g transform="translate(1107.6 441.6) skewX(-12)" stroke-linejoin="round"><text x="5.4" y="3.4" font-family="Liberation Sans,sans-serif" font-weight="700" font-size="18" fill="#9d111c" stroke="#9d111c" stroke-width="1.2" textLength="34" lengthAdjust="spacingAndGlyphs">TEXT</text><text x="4.6" y=".6" font-family="Liberation Sans,sans-serif" font-weight="700" font-size="18" fill="#de202d" stroke="#de202d" stroke-width=".7" textLength="34" lengthAdjust="spacingAndGlyphs">TEXT</text></g><path d="M1169.9 429.2L1197.1 433.1L1202.6 441.3L1197.1 456L1171.9 451Z" fill="#2b4697"/><path d="M1197.1 433.1L1202.6 441.3L1197.1 456L1196.2 446Z" fill="#20357a"/><path d="M1245.8 424.3L1230.2 449.6L1253.2 456.4Z" fill="#f3d320"/><path d="M1245.8 424.3L1253.2 456.4L1261 441.8Z" fill="#d7b414"/><path d="M1117 510.7A13 13 0 0 1 1142.8 510.7A12.9 6.8 0 0 1 1117 510.7Z" fill="url(#dome)"/><path d="M1174.2 491.3L1182.6 486.8L1197.1 488L1202.6 495.1L1201 517.5L1191.3 524.3L1177.3 521.4Z" fill="#2c4298"/><path d="M1174.2 491.3L1182.6 486.8L1197.1 488L1202.6 495.1L1193.3 498.6L1179.6 496.4Z" fill="#3c55ac"/><path d="M1193.3 498.6L1202.6 495.1L1201 517.5L1191.3 524.3Z" fill="#23367f"/><path d="M1233.7 516.6C1234.6 506 1239.6 493.2 1246.2 493.2C1252.6 493.2 1257.6 506 1258.4 516.6Q1246 526.6 1233.7 516.6Z" fill="url(#par)" stroke="#9a9a9c" stroke-width=".6"/><ellipse cx="1130" cy="574.9" rx="13.2" ry="8.4" fill="#1d9fd9"/><path d="M1117 576.4A13.2 8.4 0 0 0 1143 576.4A13.4 6.8 0 0 1 1117 576.4Z" fill="#1687c2"/><ellipse cx="1130" cy="573.8" rx="5.8" ry="2.5" fill="#eef5f9"/><path d="M1174.6 571.4V577.2A13.2 6.6 0 0 0 1201 577.2V571.4Z" fill="#d7741a"/><ellipse cx="1187.8" cy="571.4" rx="13.2" ry="6.6" fill="#f0912e"/><ellipse cx="1187.8" cy="571" rx="5.6" ry="2.8" fill="#c2681a"/><path d="M1233.8 569.6V578.6L1240.4 586.2L1260.6 577V568.6Z" fill="#85583a"/><path d="M1240.2 577.6L1233.8 569.8Q1233 564.6 1239 563.6Q1243.6 563.2 1245.8 566Q1249.6 562.6 1255.6 563.6Q1261.8 565.2 1260.6 569.2Z" fill="#ab764d"/><path d="M1119.2 642.8L1122.5 646.5L1117.8 652.0L1128.0 651.4L1133.8 655.1L1135.8 649.8L1142.8 647.5L1136.6 643.8L1133.4 640.2L1128.4 641.8Z" fill="#56bcd0"/><path d="M1129.5 645.7L1119.2 642.8L1122.5 646.5Z" fill="#3f9fb6"/><path d="M1129.5 645.7L1122.5 646.5L1117.8 652.0Z" fill="#4fb3c8"/><path d="M1129.5 645.7L1117.8 652.0L1128.0 651.4Z" fill="#46a9bf"/><path d="M1129.5 645.7L1128.0 651.4L1133.8 655.1Z" fill="#5cc2d6"/><path d="M1129.5 645.7L1133.8 655.1L1135.8 649.8Z" fill="#56bcd0"/><path d="M1129.5 645.7L1135.8 649.8L1142.8 647.5Z" fill="#6fd4e4"/><path d="M1129.5 645.7L1142.8 647.5L1136.6 643.8Z" fill="#74d8e6"/><path d="M1129.5 645.7L1136.6 643.8L1133.4 640.2Z" fill="#6accde"/><path d="M1129.5 645.7L1133.4 640.2L1128.4 641.8Z" fill="#4aaec4"/><path d="M1129.5 645.7L1128.4 641.8L1119.2 642.8Z" fill="#419fb6"/><path d="M1119.2 642.8L1122.5 646.5L1117.8 652.0L1128.0 651.4L1133.8 655.1L1135.8 649.8L1142.8 647.5L1136.6 643.8L1133.4 640.2L1128.4 641.8Z" fill="none" stroke="#2f8399" stroke-width=".6" stroke-linejoin="round"/><path d="M1201.4 641.4L1195.2 644.9L1195.2 649.2L1201.4 645.7Z" fill="#d9c112"/><path d="M1195.2 644.9L1191.6 650.8L1191.6 655.1L1195.2 649.2Z" fill="#a8940a"/><path d="M1191.6 650.8L1187.0 645.7L1187.0 650.0L1191.6 655.1Z" fill="#d2ba10"/><path d="M1187.0 645.7L1176.4 647.7L1176.4 652.0L1187.0 650.0Z" fill="#a8940a"/><path d="M1176.4 647.7L1180.7 642.6L1180.7 646.9L1176.4 652.0Z" fill="#cdb50e"/><path d="M1180.7 642.6L1176.8 637.9L1176.8 642.2L1180.7 646.9Z" fill="#a08c08"/><path d="M1176.8 637.9L1182.7 639.1L1182.7 643.4L1176.8 642.2Z" fill="#b8a20c"/><path d="M1176.8 637.9L1182.7 639.1L1191.6 635.2L1193.2 639.5L1201.4 641.4L1195.2 644.9L1191.6 650.8L1187.0 645.7L1176.4 647.7L1180.7 642.6Z" fill="#e9d51b" stroke="#9c880a" stroke-width=".5" stroke-linejoin="round"/><path d="M1246.2 631.9L1258.4 638.1L1256.3 651L1242.6 655.8L1234.3 648.9L1236.1 636.7Z" fill="#e01929"/><path d="M1246.2 631.9L1258.4 638.1L1248.4 642.4Z" fill="#e8303c"/><path d="M1248.4 642.4L1258.4 638.1L1256.3 651Z" fill="#c91422"/><path d="M1248.4 642.4L1256.3 651L1242.6 655.8Z" fill="#d31725"/><path d="M1236.1 636.7L1248.4 642.4L1234.3 648.9Z" fill="#d81826"/></svg>
<div class="abs" style="left:28px;top:110px;width:1067.6px;height:2.4px;background:linear-gradient(#e6e6e6,rgba(235,235,235,0))"></div><svg class="abs" style="left:45px;top:128px;" width="50" height="48" viewBox="0 0 50 48"><path d="M5.6 3.2L45.4 5.4L44 44.6L2.6 42.2Z" fill="rgba(252,252,252,.93)" stroke="#b9b9b9" stroke-width="1"/><text x="16.2" y="28.2" font-family="Liberation Sans,sans-serif" font-weight="700" font-size="11.6" fill="#a3a3a3" transform="rotate(3 24 24)" textLength="16.6" lengthAdjust="spacingAndGlyphs">TOP</text></svg><svg class="abs" style="left:38.5px;top:196px;" width="24" height="24" viewBox="0 0 24 24"><circle cx="12" cy="12" r="10.6" fill="rgba(255,255,255,.55)" stroke="#bdbdbd" stroke-width="1"/><path d="M6.4 12L12 7L17.6 12M8 11V16.4H10.6V13.4H13.4V16.4H16V11" fill="none" stroke="#b0b0b0" stroke-width="1.1" stroke-linejoin="round"/></svg><svg class="abs" style="left:38.5px;top:223.6px;" width="24" height="24" viewBox="0 0 24 24"><circle cx="12" cy="12" r="10.6" fill="rgba(255,255,255,.55)" stroke="#bdbdbd" stroke-width="1"/><path d="M7.4 10V7.4H10M14 7.4H16.6V10M16.6 14V16.6H14M10 16.6H7.4V14" fill="none" stroke="#b0b0b0" stroke-width="1.1" stroke-linejoin="round"/></svg><svg class="abs" style="left:38.5px;top:251.6px;" width="24" height="24" viewBox="0 0 24 24"><circle cx="12" cy="12" r="10.6" fill="rgba(255,255,255,.55)" stroke="#bdbdbd" stroke-width="1"/><path d="M12 7.6V16.4M7.6 12H16.4" fill="none" stroke="#b0b0b0" stroke-width="1.1" stroke-linejoin="round"/></svg><svg class="abs" style="left:38.5px;top:279.4px;" width="24" height="24" viewBox="0 0 24 24"><circle cx="12" cy="12" r="10.6" fill="rgba(255,255,255,.55)" stroke="#bdbdbd" stroke-width="1"/><path d="M7.6 12H16.4" fill="none" stroke="#b0b0b0" stroke-width="1.1" stroke-linejoin="round"/></svg><svg class="abs" style="left:38.5px;top:307.2px;" width="24" height="24" viewBox="0 0 24 24"><circle cx="12" cy="12" r="10.6" fill="rgba(255,255,255,.55)" stroke="#bdbdbd" stroke-width="1"/><path d="M12 6.8L16.6 9.4V14.6L12 17.2L7.4 14.6V9.4Z M7.4 9.4L12 12L16.6 9.4 M12 12V17.2" fill="none" stroke="#b0b0b0" stroke-width="1.1" stroke-linejoin="round"/></svg><div class="abs" style="left:918.2px;top:120.2px;width:170px;height:43px;background:#fff;box-shadow:0 1px 2px rgba(0,0,0,.12)"></div><svg class="abs" style="left:926px;top:131.2px;" width="10.4" height="5.6" viewBox="0 0 10.4 5.6"><path d="M0 0H10.4L5.2 5.4Z" fill="#bdbdbd"/></svg><span class="t" style="left:951.60px;top:124.84px;font-size:10.00px;font-weight:700;color:#4b4e5d;letter-spacing:0.023px;">Shapes(5)</span><svg class="abs" style="left:948px;top:138px;" width="23" height="23" viewBox="0 0 23 23"><circle cx="11.4" cy="11.2" r="10.3" fill="#fff" stroke="#5e8fd6" stroke-width="1"/><circle cx="11.4" cy="11.2" r="8.1" fill="#f2811c"/></svg><svg class="abs" style="left:973.5px;top:140.5px;" width="17.2" height="17.2" viewBox="0 0 17.2 17.2"><defs><pattern id="hz" width="3.4" height="3.4" patternUnits="userSpaceOnUse" patternTransform="rotate(-45)"><rect width="3.4" height="3.4" fill="#c9c9c9"/><rect width="3.4" height="1.6" fill="#a4a4a4"/></pattern></defs><circle cx="8.6" cy="8.6" r="8.2" fill="url(#hz)"/></svg><svg class="abs" style="left:1042px;top:142px;" width="10" height="11" viewBox="0 0 10 11"><rect x=".4" y="4.2" width="9" height="6" rx=".8" fill="#b52fd3"/><path d="M2.4 4.6V3.2A2.5 2.5 0 0 1 7.4 3.2V4.6" fill="none" stroke="#b52fd3" stroke-width="1.3"/></svg><svg class="abs" style="left:1064.4px;top:141.2px;" width="11" height="13" viewBox="0 0 11 13"><path d="M5.5 .8Q9.6 .8 9.6 4.8Q9.6 6.6 8.2 8Q7.6 8.8 7.6 9.8H3.4Q3.4 8.8 2.8 8Q1.4 6.6 1.4 4.8Q1.4 .8 5.5 .8Z" fill="#cfd2dd" stroke="#70737c" stroke-width="1"/><path d="M3.8 11H7.2M4.4 12.3H6.6" stroke="#70737c" stroke-width=".9"/></svg><div class="abs" style="left:1089.6px;top:384.2px;width:10.6px;height:31.2px;background:#f7f7f8"></div><svg class="abs" style="left:1091px;top:391px;" width="9" height="18" viewBox="0 0 9 18"><path d="M2.4 1.9L6.9 9L2.6 15.7" fill="none" stroke="#111" stroke-width="1.5"/></svg><div class="abs" style="left:1030px;top:644.6px;width:58px;height:13px;background:rgba(250,250,250,.9)"></div><span class="t" style="left:1043.20px;top:647.86px;font-size:8.20px;font-weight:400;color:#a7a7a7;letter-spacing:-0.011px;">Edit Grid</span><span class="t" style="left:1001.20px;top:669.36px;font-size:8.20px;font-weight:400;color:#7d8d92;letter-spacing:-0.124px;">Snap Grid</span><div class="abs" style="left:1041.2px;top:667.4px;width:46.8px;height:12.8px;background:rgba(252,252,252,.95)"></div><span class="t" style="left:1047.50px;top:670.29px;font-size:8.40px;font-weight:400;color:#a5a5a5;letter-spacing:-0.301px;">1.0 mm</span><svg class="abs" style="left:1078.4px;top:670.6px;" width="4.6" height="3.6" viewBox="0 0 4.6 3.6"><path d="M0 3.4L2.3 .2L4.6 3.4Z" fill="#555"/></svg>
<div id="taskbar" class="abs"></div>
<svg class="abs" style="left:12px;top:695px;" width="18" height="17" viewBox="0 0 18 17"><defs><radialGradient id="sun" cx=".4" cy=".35" r=".7"><stop offset="0" stop-color="#ffd23a"/><stop offset="1" stop-color="#f29c12"/></radialGradient></defs><circle cx="8" cy="8.2" r="6.2" fill="url(#sun)"/><path d="M8.6 12.6Q8.4 10.4 10.6 10.2Q11.4 8.2 13.4 8.8Q15 9.2 15 10.6Q16.8 10.8 16.6 12.4Q16.4 13.6 15 13.6H10Q8.8 13.6 8.6 12.6Z" fill="#e9eaee"/></svg><span class="t" style="left:34.40px;top:696.00px;font-size:7.80px;font-weight:400;color:#ffffff;letter-spacing:-0.407px;">15°C</span><span class="t" style="left:34.40px;top:706.33px;font-size:8.00px;font-weight:400;color:#dcdcdc;letter-spacing:0.060px;">Stort sett sol</span><svg class="abs" style="left:382px;top:695px;" width="18" height="18" viewBox="0 0 18 18"><defs><linearGradient id="wn" x1="0" y1="0" x2="1" y2="1"><stop offset="0" stop-color="#55c8f8"/><stop offset="1" stop-color="#1b8fe0"/></linearGradient></defs><rect x="1.2" y="1.4" width="7.3" height="7.3" fill="url(#wn)"/><rect x="9.5" y="1.4" width="7.3" height="7.3" fill="url(#wn)"/><rect x="1.2" y="9.7" width="7.3" height="7.3" fill="url(#wn)"/><rect x="9.5" y="9.7" width="7.3" height="7.3" fill="url(#wn)"/></svg><svg class="abs" style="left:411.7px;top:695px;" width="18" height="18" viewBox="0 0 18 18"><circle cx="10.4" cy="7.6" r="5" fill="none" stroke="#f2f2f2" stroke-width="1.7"/><path d="M6.8 11.4L2.4 16" stroke="#f2f2f2" stroke-width="2" stroke-linecap="round"/></svg><svg class="abs" style="left:441px;top:695px;" width="18" height="18" viewBox="0 0 18 18"><rect x="1" y="6" width="10" height="9.6" rx="1" fill="#6e6e6e"/><rect x="6" y="2.2" width="11" height="10" rx="1" fill="#ededed"/></svg><svg class="abs" style="left:470.3px;top:695px;" width="18" height="18" viewBox="0 0 18 18"><path d="M9 1.4A7.6 7.6 0 1 1 4.6 15.2L1.6 16.4L2.4 13A7.6 7.6 0 0 1 9 1.4Z" fill="#7b6fe0"/><rect x="4.8" y="6" width="5.8" height="5.4" rx="1.2" fill="#fff"/><path d="M11 8L13.6 6.4V11L11 9.4Z" fill="#fff"/></svg><svg class="abs" style="left:499.6px;top:695px;" width="18" height="18" viewBox="0 0 18 18"><defs><linearGradient id="eg" x1="0" y1="0" x2="1" y2="1"><stop offset="0" stop-color="#37c2b1"/><stop offset=".5" stop-color="#1b9de2"/><stop offset="1" stop-color="#0c59a4"/></linearGradient></defs><circle cx="9" cy="9" r="7.8" fill="url(#eg)"/><path d="M3 11.4Q3.4 6 9.4 5.8Q14.4 6 14.8 10H9.6Q9.2 8.2 7.6 8.6Q5 9.6 6.6 13.8Q3.8 13.8 3 11.4Z" fill="#0b4f94" opacity=".75"/><path d="M1.6 9Q2.4 2.6 9 1.4Q14.6 1.6 16.4 7Q13 3.6 8.6 4.6Q3.6 5.6 1.6 9Z" fill="#5ee07f" opacity=".85"/></svg><svg class="abs" style="left:528.9px;top:694.4px;" width="18" height="18" viewBox="0 0 18 18"><path d="M1 3.4Q1 2.4 2 2.4H6.4L8 4.2H16Q17 4.2 17 5.2V14.6Q17 15.6 16 15.6H2Q1 15.6 1 14.6Z" fill="#f2b520"/><path d="M1 6.2H17V14.6Q17 15.6 16 15.6H2Q1 15.6 1 14.6Z" fill="#fbd24c"/><path d="M4.4 15.6V12.4Q4.4 11.4 5.4 11.4H12.6Q13.6 11.4 13.6 12.4V15.6Z" fill="#2a84d2"/></svg><div class="abs" style="left:535.6px;top:715.2px;width:4.6px;height:1.5px;border-radius:1px;background:#9a9a9a"></div><svg class="abs" style="left:558.2px;top:694.6px;" width="18" height="18" viewBox="0 0 18 18"><circle cx="9" cy="9" r="7.6" fill="#050505"/><text x="9" y="10.4" font-family="Liberation Sans,sans-serif" font-weight="700" font-size="3.6" fill="#fff" text-anchor="middle">MS-FIX</text></svg><svg class="abs" style="left:587.5px;top:695px;" width="18" height="18" viewBox="0 0 18 18"><path d="M6 4.6V3.4Q6 1.6 7.8 1.6H10.2Q12 1.6 12 3.4V4.6" fill="none" stroke="#2f9be6" stroke-width="1.4"/><rect x="1.6" y="4.4" width="14.8" height="12.2" rx="1.6" fill="#f3f3f3"/><rect x="5.4" y="7" width="3.2" height="3.2" fill="#f25022"/><rect x="9.4" y="7" width="3.2" height="3.2" fill="#7fba00"/><rect x="5.4" y="11" width="3.2" height="3.2" fill="#00a4ef"/><rect x="9.4" y="11" width="3.2" height="3.2" fill="#ffb900"/></svg><svg class="abs" style="left:616.8px;top:695px;" width="18" height="18" viewBox="0 0 18 18"><path d="M1 7.4L9 2L17 7.4V15.6H1Z" fill="#1f7fd6"/><path d="M2.4 7.2H15.6V12H2.4Z" fill="#e8f3fc"/><path d="M1 7.6L9 12.6L17 7.6V15.6H1Z" fill="#39a0ee"/><path d="M1 15.6L9 10.6L17 15.6Z" fill="#2b8fe2"/></svg><svg class="abs" style="left:646px;top:695px;" width="18" height="18" viewBox="0 0 18 18"><defs><linearGradient id="la" x1="0" y1="0" x2="1" y2="1"><stop offset="0" stop-color="#2db4e4"/><stop offset="1" stop-color="#1683c4"/></linearGradient></defs><rect x=".6" y="1" width="16.8" height="16" fill="url(#la)"/><path d="M6 4V13.4H12.6" fill="none" stroke="#fff" stroke-width="2.2"/></svg><svg class="abs" style="left:675px;top:695px;" width="18" height="18" viewBox="0 0 18 18"><rect x="1.4" y="1.6" width="15.2" height="15.2" fill="#107c10"/><circle cx="9" cy="9.2" r="5.8" fill="#fff"/><path d="M5 5.6Q9 8 9 8Q9 8 13 5.6Q11.4 4 9 5.2Q6.6 4 5 5.6ZM4.6 13Q6 9.6 9 8.6Q12 9.6 13.4 13Q11.6 15 9 15Q6.4 15 4.6 13Z" fill="#107c10"/></svg><svg class="abs" style="left:687.6px;top:692.8px;" width="9" height="9" viewBox="0 0 9 9"><circle cx="4.5" cy="4.5" r="4.3" fill="#c9bbea"/><text x="4.5" y="6.7" font-family="Liberation Sans,sans-serif" font-size="6" fill="#222" text-anchor="middle">1</text></svg><svg class="abs" style="left:704px;top:695px;" width="18" height="18" viewBox="0 0 18 18"><path d="M6 1.6H13.4L12.4 4.8H9.6L9.4 7.2H12L11.4 10.2H9.2L9 16.6L5.6 15.4L5.8 8L4 9.6L4.6 5.6Z" fill="#f4f4f4"/></svg><svg class="abs" style="left:734.8px;top:695px;" width="18" height="18" viewBox="0 0 18 18"><rect x="1.6" y="1.6" width="14.8" height="14.8" rx="2.4" fill="#e8873a"/><rect x="1.6" y="1.6" width="5" height="14.8" rx="2" fill="#d9e4f0"/><rect x="11.4" y="1.6" width="5" height="14.8" rx="2" fill="#f1f1f1"/><rect x="7.8" y="3" width="2.4" height="9" rx="1.2" fill="#fff"/><circle cx="9" cy="13.6" r="2.4" fill="#d63a2a"/><rect x="8.4" y="6" width="1.2" height="7" fill="#d63a2a"/></svg><svg class="abs" style="left:763.6px;top:695px;" width="18" height="18" viewBox="0 0 18 18"><defs><linearGradient id="dp" x1="0" y1="0" x2="0" y2="1"><stop offset="0" stop-color="#0d1c66"/><stop offset="1" stop-color="#081244"/></linearGradient></defs><rect x="1" y="1.4" width="16" height="15.6" fill="url(#dp)"/><text x="9" y="11" font-family="Liberation Serif,serif" font-style="italic" font-size="4.6" fill="#e8eeff" text-anchor="middle">Disney+</text><path d="M4 6.4Q9 3.4 14 6.6" fill="none" stroke="#8fb0ff" stroke-width=".5"/></svg><svg class="abs" style="left:792.7px;top:695px;" width="18" height="18" viewBox="0 0 18 18"><circle cx="9" cy="9" r="8" fill="#1670d6"/><path d="M9 3.6L11.4 8H6.6ZM5 9.4L9.2 9.2L7.2 13.4ZM13 9.4L10.8 13.4L9.6 9.8Z" fill="#fff"/><circle cx="9" cy="9.2" r="4.2" fill="none" stroke="#fff" stroke-width=".9"/></svg><svg class="abs" style="left:822px;top:695px;" width="18" height="18" viewBox="0 0 18 18"><path d="M3.6 1.4H13L17 5V14.4Q17 16.6 14.8 16.6H3.6Q1.4 16.6 1.4 14.4V3.6Q1.4 1.4 3.6 1.4Z" fill="#2a7be4"/><path d="M12.4 6.6Q9.8 4.4 7.2 6.2Q5.2 8 6 10.6Q7.2 13.2 10 12.8Q11.4 12.6 12.4 11.6" fill="none" stroke="#fff" stroke-width="1.7"/></svg><div class="abs" style="left:877.4px;top:690.6px;width:25px;height:27px;border-radius:3px;background:#343536;box-shadow:inset 0 0 0 .6px #434446"></div><svg class="abs" style="left:880.7px;top:694.4px;" width="18" height="18" viewBox="0 0 18 18"><circle cx="9" cy="9" r="7.2" fill="none" stroke="#f0325f" stroke-width="1.5"/><ellipse cx="9" cy="9" rx="3.3" ry="5.6" fill="none" stroke="#f0325f" stroke-width="1.4"/></svg><div class="abs" style="left:882.8px;top:715px;width:14.4px;height:1.7px;border-radius:1px;background:#f0668a"></div><svg class="abs" style="left:1098px;top:701px;" width="10" height="7" viewBox="0 0 10 7"><path d="M1 5.4L4.8 1.4L8.6 5.4" fill="none" stroke="#f0f0f0" stroke-width="1.1"/></svg><svg class="abs" style="left:1111px;top:698px;" width="14" height="12" viewBox="0 0 14 12"><path d="M2.2 8.4Q.6 8.2 .8 6.6Q1.2 5.2 2.8 5.4Q3.2 3 5.6 3Q7.4 3 8 4.6Q10.4 4.4 10.6 6.6Q10.6 8.4 8.8 8.4Z" fill="#c9c9c9"/><circle cx="10" cy="8.6" r="2.9" fill="#e8283a"/><path d="M8.8 7.4L11.2 9.8M11.2 7.4L8.8 9.8" stroke="#fff" stroke-width=".8"/></svg><span class="t" style="left:1134.20px;top:696.24px;font-size:7.40px;font-weight:400;color:#ffffff;letter-spacing:-0.412px;">ENG</span><span class="t" style="left:1136.20px;top:706.84px;font-size:7.40px;font-weight:400;color:#ffffff;letter-spacing:0.250px;">NO</span><svg class="abs" style="left:1161px;top:698.6px;" width="12" height="10" viewBox="0 0 12 10"><path d="M1 3.8Q6 -.8 11 3.8" fill="none" stroke="#f0f0f0" stroke-width="1.1"/><path d="M2.8 5.8Q6 3 9.2 5.8" fill="none" stroke="#f0f0f0" stroke-width="1.1"/><path d="M4.4 7.6Q6 6.2 7.6 7.6" fill="none" stroke="#f0f0f0" stroke-width="1.1"/><circle cx="6" cy="8.8" r=".8" fill="#f0f0f0"/></svg><svg class="abs" style="left:1176px;top:698.6px;" width="12" height="11" viewBox="0 0 12 11"><path d="M1 4H2.8L5.6 1.4V9.6L2.8 7H1Z" fill="none" stroke="#f0f0f0" stroke-width="1" stroke-linejoin="round"/><path d="M7.4 3.4Q8.6 5.5 7.4 7.6" fill="none" stroke="#f0f0f0" stroke-width=".9"/><path d="M9 2Q11 5.5 9 9" fill="none" stroke="#777" stroke-width=".9"/></svg><svg class="abs" style="left:1192px;top:698.6px;" width="14" height="11" viewBox="0 0 14 11"><rect x="3" y="2.6" width="8.6" height="5.8" rx="1.4" fill="none" stroke="#f0f0f0" stroke-width="1"/><path d="M12.4 4.4V6.6" stroke="#f0f0f0" stroke-width="1.1"/><rect x="4.2" y="3.8" width="3" height="3.4" fill="#f0f0f0"/><circle cx="2.6" cy="2.6" r="1.8" fill="#f0f0f0"/></svg><span class="t" style="left:1232.80px;top:695.60px;font-size:7.80px;font-weight:400;color:#ffffff;letter-spacing:-0.264px;">13:56</span><span class="t" style="left:1214.00px;top:706.20px;font-size:7.80px;font-weight:400;color:#ffffff;letter-spacing:0.256px;">5/20/2022</span><svg class="abs" style="left:1255.8px;top:699px;" width="11" height="11" viewBox="0 0 11 11"><circle cx="5.5" cy="5.5" r="5.2" fill="#c3b4e6"/><text x="5.5" y="8.1" font-family="Liberation Sans,sans-serif" font-size="7.2" fill="#26202e" text-anchor="middle">3</text></svg>
</div>
</body>
</html>
